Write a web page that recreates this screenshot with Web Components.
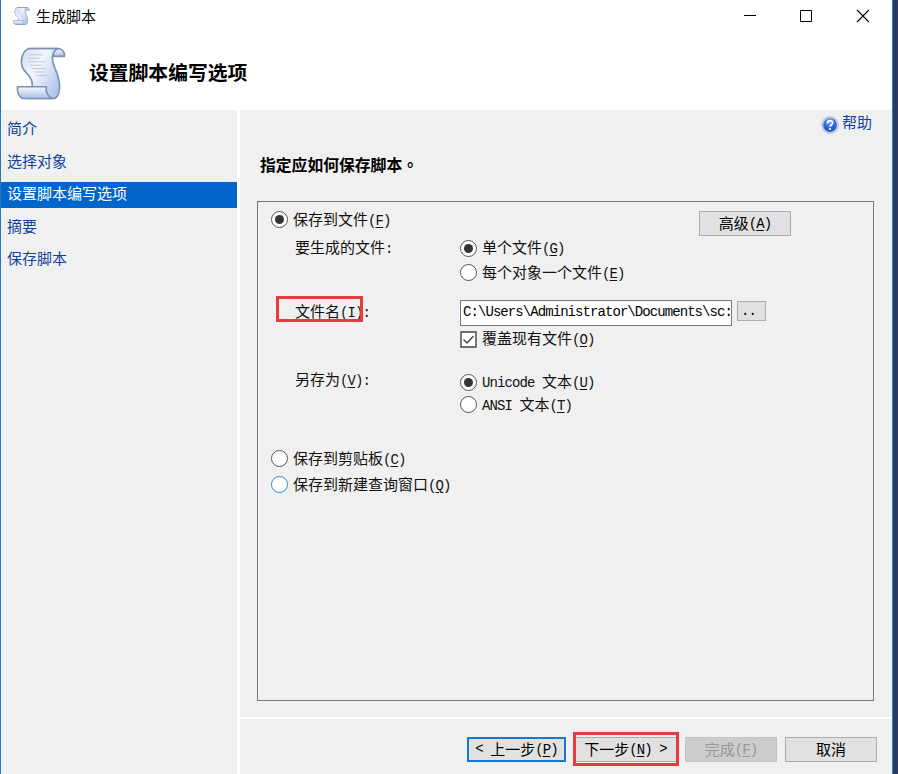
<!DOCTYPE html>
<html lang="zh-CN">
<head>
<meta charset="utf-8">
<title>生成脚本</title>
<style>
html,body{margin:0;height:100%;overflow:hidden}
body{font:15px/20px "Noto Sans CJK SC",sans-serif;color:#111}
</style>
</head>
<body>
<script-wizard></script-wizard>
<script>
function define(name, html) {
  const t = document.createElement('template');
  t.innerHTML = html;
  customElements.define(name, class extends HTMLElement {
    constructor() {
      super();
      this.attachShadow({mode: 'open'}).append(t.content.cloneNode(true));
    }
  });
}

define('latin-text', `<style>
:host{display:inline;font-family:"Liberation Mono",monospace;font-size:14px;letter-spacing:-.9px;white-space:pre}
</style><slot></slot>`);

define('hot-key', `<style>
:host{display:inline;white-space:nowrap}
span{font-family:"Liberation Mono",monospace;font-size:14px;letter-spacing:-.9px}
u{text-decoration-thickness:1px;text-underline-offset:2px}
</style><span>(<u><slot></slot></u>)</span>`);

define('scroll-icon', `<style>
:host{display:block}svg{display:block;width:100%;height:100%}
</style>
<svg viewBox="0 0 52 54">
<defs><linearGradient id="p" x1="0" y1="0" x2="1" y2=".7"><stop offset="0" stop-color="#cfdcf3"/><stop offset=".45" stop-color="#f4f8fe"/><stop offset="1" stop-color="#b3c6ea"/></linearGradient>
<linearGradient id="r" x1="0" y1="0" x2="0" y2="1"><stop offset="0" stop-color="#f6f9ff"/><stop offset="1" stop-color="#a9bfe6"/></linearGradient></defs>
<path d="M13 1.500H44C38 4 36 9 37.500 15C39 22 45 31 44.500 41C44 49 42 52.500 38 52.500H12C18 40 18 35 13 29C7 23 4 19 6 11C7 6 9 3 13 1.500Z" fill="url(#p)" stroke="#8292b5" stroke-width="1.700"/>
<path d="M13 1.500H42C47 1.500 49.500 4 49.500 9.500H38C38 5 39 3 43 1.600" fill="url(#r)" stroke="#8292b5" stroke-width="1.700" stroke-linejoin="round"/>
<path d="M1.500 40.500H31C30 46 32 50 37 52.500H7C3 51 1 46 1.500 40.500Z" fill="url(#r)" stroke="#7f90b6" stroke-width="1.700" stroke-linejoin="round"/>
<path d="M13 8H28M12 11.500H24M13 15H30M14 18.500H26M16 22H31M18 25.500H29M20 29H32" stroke="#c0c7d6" stroke-width="1"/>
</svg>`);

define('title-bar', `<style>
:host{display:flex;align-items:center;height:32px;padding:0 23px 0 11px;box-sizing:border-box;color:#000}
scroll-icon{width:19px;height:18px;margin-right:5px}
svg{display:block;margin-left:auto}
</style>
<scroll-icon></scroll-icon><slot></slot>
<svg width="126" height="14" viewBox="0 0 126 14" fill="none" stroke="#000" stroke-width="1.200">
<path d="M1 6.500H13" stroke-width="1"/><path d="M57.500 1.500H68.500V12.500H57.500Z" stroke-width="1"/><path d="M114 1L126 13M126 1L114 13"/></svg>`);

define('page-header', `<style>
:host{display:flex;align-items:center;height:78px;box-sizing:border-box;padding:0 0 0 15px;font-size:19.800px;font-weight:700;color:#000}
scroll-icon{width:51px;height:53px;margin:4px 22px 0 0}
span{margin-top:2px}
</style><scroll-icon></scroll-icon><span><slot></slot></span>`);

define('nav-item', `<style>
:host{display:flex;align-items:center;height:26px;padding:0 0 4px 6px;box-sizing:border-box;color:#12429f}
:host([selected]){background:#0066cc;color:#fff}
</style><slot></slot>`);

define('nav-list', `<style>
:host{display:flex;flex:none;flex-direction:column;gap:6.500px;width:236px;box-sizing:border-box;padding-top:7px;background:#f0f0f0}
</style><slot></slot>`);

define('help-link', `<style>
:host{display:flex;align-items:center;justify-content:flex-end;gap:3px;padding-right:3px;color:#12429f}
svg{margin-top:4px}
span{margin-top:-2px}
</style>
<svg width="18" height="18" viewBox="0 0 18 18"><defs><radialGradient id="h" cx=".45" cy=".25" r=".8"><stop offset="0" stop-color="#8db5f5"/><stop offset=".5" stop-color="#3169d6"/><stop offset="1" stop-color="#2451b8"/></radialGradient></defs>
<circle cx="9" cy="9" r="8.300" fill="#dce5f5" stroke="#8fa4cf" stroke-width=".8"/><circle cx="9" cy="9" r="6.900" fill="url(#h)"/>
<path d="M6.500 7.200C6.600 3.700 12 3.900 11.700 7C11.500 8.800 9.200 8.900 9.100 10.800" fill="none" stroke="#fff" stroke-width="1.700"/><circle cx="9" cy="13" r="1.100" fill="#fff"/></svg><span><slot></slot></span>`);

define('radio-option', `<style>
:host{display:flex;align-items:center;gap:5px;white-space:nowrap}
i{box-sizing:border-box;width:17px;height:17px;border:1.500px solid #555;border-radius:50%;background:#fff;display:grid;place-items:center;flex:none}
:host([hot]) i{border-color:#2f86d1}
:host([checked]) i::after{content:"";width:9px;height:9px;border-radius:50%;background:#333}
</style><i></i><span><slot></slot></span>`);

define('check-option', `<style>
:host{display:flex;align-items:center;gap:5px}
svg{flex:none}
</style><svg width="17" height="17" viewBox="0 0 17 17" fill="none" stroke="#444"><path d="M1 1H16V16H1Z" fill="#fff" stroke-width="1.400"/><path d="M3.500 8.500L7 12L13.500 5" stroke-width="1.400"/></svg><span><slot></slot></span>`);

define('push-button', `<style>
:host{display:flex;align-items:center;justify-content:center;box-sizing:border-box;width:92px;height:25px;padding-bottom:2px;border:1px solid #adadad;background:#e1e1e1;color:#000;white-space:pre}
:host([focused]){border:2px solid #1379d2}
:host([disabled]){background:#ccc;border-color:#c4c4c4;color:#979797}
</style><slot></slot>`);

define('path-field', `<style>
:host{display:flex;align-items:center;box-sizing:border-box;width:272px;height:26px;padding:0 0 4px 2px;border:1px solid #777;background:#fff;color:#000}
div{overflow:hidden;white-space:nowrap;width:268px}
</style><div><slot></slot></div>`);

define('save-options', `<style>
:host{position:relative;display:grid;grid-template-columns:189px 1fr;grid-template-rows:28px 27px 23px 15px 27px 26px 18px 24px 23px 30px 24px 27px;align-items:center;align-content:start;box-sizing:border-box;width:617px;height:500px;border:1px solid #777;padding:4px 0 0 13px}
.l{padding-left:24px;grid-column:1}
.r{grid-column:2}
.wide{grid-column:1 / 3}
.file{display:flex;gap:5px}
.file push-button{width:29px;height:20px;margin-top:1px;box-sizing:border-box;padding:0 6px 0 0}
.adv{grid-column:2;grid-row:1;align-self:start;margin:5px 0 0 239px}
.mark{position:absolute;left:18px;top:94px;width:87px;height:26px;box-sizing:border-box;border:3px solid #e33d40}
.path{letter-spacing:-.93px}
</style>
<radio-option checked style="grid-area:1/1;margin-top:-1px">保存到文件<hot-key>F</hot-key></radio-option>
<push-button class="adv">高级<hot-key>A</hot-key></push-button>
<span class="l" style="grid-row:2">要生成的文件<latin-text>:</latin-text></span>
<radio-option class="r" checked style="grid-row:2;margin-top:1px">单个文件<hot-key>G</hot-key></radio-option>
<radio-option class="r" style="grid-row:3">每个对象一个文件<hot-key>E</hot-key></radio-option>
<span class="l" style="grid-row:5;margin-top:-2px">文件名<hot-key>I</hot-key><latin-text>:</latin-text></span>
<div class="r file" style="grid-row:5"><path-field><latin-text class="path">C:\\Users\\Administrator\\Documents\\sc:</latin-text></path-field><push-button><latin-text>..</latin-text></push-button></div>
<check-option class="r" style="grid-row:6">覆盖现有文件<hot-key>O</hot-key></check-option>
<span class="l" style="grid-row:8;margin-top:-4px">另存为<hot-key>V</hot-key><latin-text>:</latin-text></span>
<radio-option class="r" checked style="grid-row:8"><latin-text>Unicode </latin-text>文本<hot-key>U</hot-key></radio-option>
<radio-option class="r" style="grid-row:9;margin-top:-2px"><latin-text>ANSI </latin-text>文本<hot-key>T</hot-key></radio-option>
<radio-option class="wide" style="grid-row:11;margin-top:-1px">保存到剪贴板<hot-key>C</hot-key></radio-option>
<radio-option class="wide" hot style="grid-row:12">保存到新建查询窗口<hot-key>Q</hot-key></radio-option>
<div class="mark"></div>`);

define('wizard-footer', `<style>
:host{display:flex;justify-content:flex-end;gap:8px;box-sizing:border-box;height:57px;border-top:2px solid #fff;padding:18px 15px 0 0}
.back{width:99px}
.next{position:relative;width:103px}
.next push-button{width:103px}
.mark{position:absolute;left:-1px;top:-5px;width:106px;height:34px;box-sizing:border-box;border:3px solid #e33d40}
</style>
<push-button class="back" focused><latin-text>&lt; </latin-text>上一步<hot-key>P</hot-key></push-button>
<div class="next"><push-button>下一步<hot-key>N</hot-key><latin-text> &gt;</latin-text></push-button><div class="mark"></div></div>
<push-button disabled>完成<hot-key>F</hot-key></push-button>
<push-button>取消</push-button>`);

define('script-wizard', `<style>
:host{display:flex;flex-direction:column;box-sizing:border-box;width:898px;height:774px;border-left:1px solid #2479bd;border-right:5px solid #2a3a60;background:#fff}
.win{flex:1;display:flex;flex-direction:column;border-right:1px solid #1a82d2;min-height:0}
.body{flex:1;display:flex;gap:3px;min-height:0}
main{flex:1;min-width:0;background:#f0f0f0;display:flex;flex-direction:column}
.content{flex:1;padding:3px 17px 0 17px}
help-link{height:20px}
h2{margin:22px 0 25px 3px;font-size:15.800px;line-height:20px;height:21px;font-weight:700;color:#000}
.stop{font-family:"Noto Sans CJK TC",sans-serif}
</style>
<div class="win">
<title-bar>生成脚本</title-bar>
<page-header>设置脚本编写选项</page-header>
<div class="body">
<nav-list><nav-item>简介</nav-item><nav-item>选择对象</nav-item><nav-item selected>设置脚本编写选项</nav-item><nav-item>摘要</nav-item><nav-item>保存脚本</nav-item></nav-list>
<main><div class="content"><help-link>帮助</help-link><h2>指定应如何保存脚本<span class="stop" lang="zh-TW">。</span></h2><save-options></save-options></div><wizard-footer></wizard-footer></main>
</div></div>`);
</script>
</body>
</html>
